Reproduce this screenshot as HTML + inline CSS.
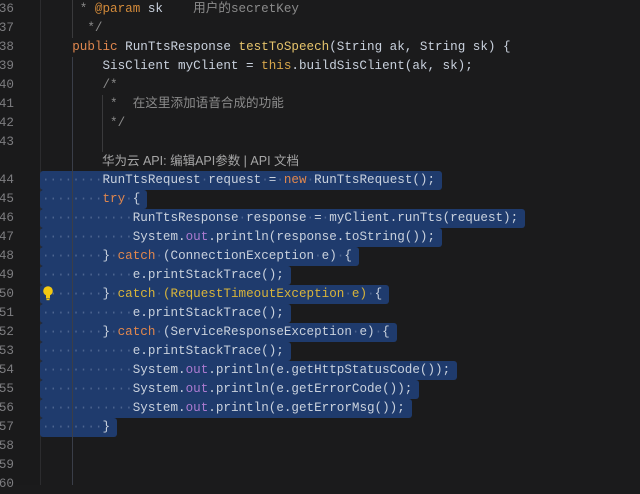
<!DOCTYPE html>
<html><head><meta charset="utf-8"><style>
body{margin:0;width:640px;height:485px;background:#1b1b1c;overflow:hidden;position:relative;font-family:"Liberation Mono","Noto Sans CJK SC",monospace;font-size:12.6px;color:#c9d1dd}
.gut{position:absolute;left:0;top:0;width:40px;height:485px;background:#1a1a1b;border-right:1px solid #2c2c2e}
.n{position:absolute;left:-26px;width:40px;text-align:right;color:#7d7d80;height:19px;line-height:19px}
.l{position:absolute;left:40px;height:19px;line-height:19px;white-space:pre}
.s{background:#1f3b6d;padding:0 7px 0 2px;border-radius:3px;display:inline-block;height:19px}
.ns{padding-left:2px}
.d{color:#4d6590}
.k{color:#e0874e}.c{color:#8b8b8b}.y{color:#e6c46c}.p{color:#ab7ad0}.t{color:#d7a64b}.g{color:#d8b43a}.a{color:#d48b3a}
.gd{position:absolute;width:1px;background:#3a3a3c}
.lens{position:absolute;left:102px;top:152px;height:19px;line-height:19px;font-family:"Liberation Sans","Noto Sans CJK SC",sans-serif;font-size:12.5px;color:#a6a6a6}
</style></head><body>
<div class="gut"></div>
<div class="gd" style="left:72px;top:0;height:38px"></div>
<div class="gd" style="left:72px;top:57px;height:428px;z-index:2;background:#3a3e48"></div>
<div class="gd" style="left:102px;top:95px;height:57px"></div>

<div class="n" style="top:0">36</div><div class="n" style="top:19px">37</div><div class="n" style="top:38px">38</div><div class="n" style="top:57px">39</div><div class="n" style="top:76px">40</div><div class="n" style="top:95px">41</div><div class="n" style="top:114px">42</div><div class="n" style="top:133px">43</div>
<div class="n" style="top:171px">44</div><div class="n" style="top:190px">45</div><div class="n" style="top:209px">46</div><div class="n" style="top:228px">47</div><div class="n" style="top:247px">48</div><div class="n" style="top:266px">49</div><div class="n" style="top:285px">50</div><div class="n" style="top:304px">51</div><div class="n" style="top:323px">52</div><div class="n" style="top:342px">53</div><div class="n" style="top:361px">54</div><div class="n" style="top:380px">55</div><div class="n" style="top:399px">56</div><div class="n" style="top:418px">57</div><div class="n" style="top:437px">58</div><div class="n" style="top:456px">59</div><div class="n" style="top:475px">60</div>

<div class="l ns" style="top:0"><span class="c">     * </span><span class="a">@param</span> sk    <span class="c">用户的secretKey</span></div>
<div class="l ns" style="top:19px"><span class="c">      */</span></div>
<div class="l ns" style="top:38px">    <span class="k">public</span> RunTtsResponse <span class="y">testToSpeech</span>(String ak, String sk) {</div>
<div class="l ns" style="top:57px">        SisClient myClient = <span class="t">this</span>.buildSisClient(ak, sk);</div>
<div class="l ns" style="top:76px"><span class="c">        /*</span></div>
<div class="l ns" style="top:95px"><span class="c">         *  在这里添加语音合成的功能</span></div>
<div class="l ns" style="top:114px"><span class="c">         */</span></div>
<div class="lens">华为云 API: 编辑API参数 | API 文档</div>

<div class="l" style="top:171px"><span class="s"><span class="d">········</span>RunTtsRequest<span class="d">·</span>request<span class="d">·</span>=<span class="d">·</span><span class="k">new</span><span class="d">·</span>RunTtsRequest();</span></div>
<div class="l" style="top:190px"><span class="s"><span class="d">········</span><span class="k">try</span><span class="d">·</span>{</span></div>
<div class="l" style="top:209px"><span class="s"><span class="d">············</span>RunTtsResponse<span class="d">·</span>response<span class="d">·</span>=<span class="d">·</span>myClient.runTts(request);</span></div>
<div class="l" style="top:228px"><span class="s"><span class="d">············</span>System.<span class="p">out</span>.println(response.toString());</span></div>
<div class="l" style="top:247px"><span class="s"><span class="d">········</span>}<span class="d">·</span><span class="k">catch</span><span class="d">·</span>(ConnectionException<span class="d">·</span>e)<span class="d">·</span>{</span></div>
<div class="l" style="top:266px"><span class="s"><span class="d">············</span>e.printStackTrace();</span></div>
<div class="l" style="top:285px"><span class="s"><span class="d">········</span>}<span class="d">·</span><span class="g">catch</span><span class="d">·</span><span class="g">(RequestTimeoutException</span><span class="d">·</span><span class="g">e)</span><span class="d">·</span>{</span></div>
<div class="l" style="top:304px"><span class="s"><span class="d">············</span>e.printStackTrace();</span></div>
<div class="l" style="top:323px"><span class="s"><span class="d">········</span>}<span class="d">·</span><span class="k">catch</span><span class="d">·</span>(ServiceResponseException<span class="d">·</span>e)<span class="d">·</span>{</span></div>
<div class="l" style="top:342px"><span class="s"><span class="d">············</span>e.printStackTrace();</span></div>
<div class="l" style="top:361px"><span class="s"><span class="d">············</span>System.<span class="p">out</span>.println(e.getHttpStatusCode());</span></div>
<div class="l" style="top:380px"><span class="s"><span class="d">············</span>System.<span class="p">out</span>.println(e.getErrorCode());</span></div>
<div class="l" style="top:399px"><span class="s"><span class="d">············</span>System.<span class="p">out</span>.println(e.getErrorMsg());</span></div>
<div class="l" style="top:418px"><span class="s"><span class="d">········</span>}</span></div>

<svg style="position:absolute;left:41px;top:285px" width="14" height="16" viewBox="0 0 14 16"><circle cx="7" cy="6" r="4.8" fill="#f2c811"/><rect x="5" y="10" width="4" height="3.5" fill="#f2c811"/><rect x="5.5" y="14" width="3" height="1.2" fill="#f2c811"/></svg>
</body></html>
